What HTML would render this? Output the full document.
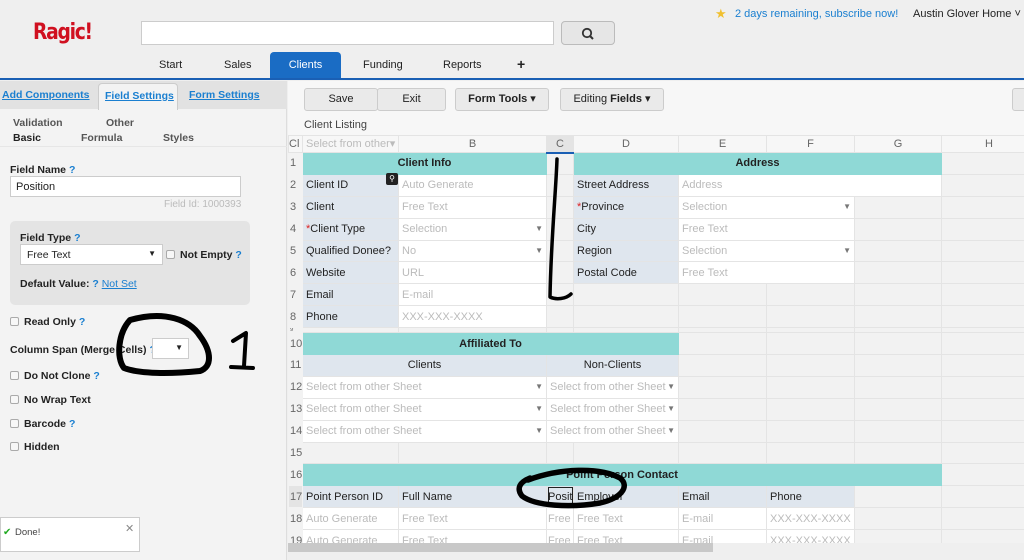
<!DOCTYPE html>
<html><head><meta charset="utf-8"><style>
*{margin:0;padding:0;box-sizing:border-box}
html,body{width:1024px;height:560px;overflow:hidden}
body{background:#efefef;font-family:"Liberation Sans","DejaVu Sans",sans-serif;font-size:11px;color:#222;position:relative}
.a{position:absolute}
.b{font-weight:bold}
.q{color:#1a7fd0;font-weight:bold}
.btn{position:absolute;top:88px;height:23px;border:1px solid #ccc;border-radius:3px;background:#eaeaea;text-align:center;line-height:21px;font-size:11px}
table{position:absolute;left:288px;top:135px;border-collapse:collapse;table-layout:fixed;width:748px}
td{border:1px solid #e4e4e4;height:21.9px;padding:0 3px;white-space:nowrap;overflow:hidden;font-size:11px;line-height:14px;background:#f2f2f2}
td.rn{color:#666;padding:0 1px;background:#f2f2f2;border-color:#f2f2f2}
td.h{background:#8fd9d6;font-weight:bold;text-align:center;border-color:#8fd9d6}
td.l{background:#dfe6ee;color:#222}
td.w{background:#fff;color:#bbb}
tr.r9 td{height:5px;line-height:4px;font-size:6px}
.ar{float:right;font-size:8px;color:#777}
tr.hd td{height:17px;text-align:center;color:#666;background:#f7f7f7}
.cb{display:inline-block;width:9px;height:9px;border:1px solid #aaa;border-radius:2px;background:#f7f7f7;margin-right:5px;vertical-align:-1px}
.lt{position:absolute;left:10px;font-weight:bold;font-size:10.5px}
</style></head><body>
<div class="a" style="left:33px;top:20px;font-size:22px;font-weight:900;color:#d01020;font-family:'DejaVu Sans',sans-serif;letter-spacing:-1.5px;transform:scaleX(0.85);transform-origin:left">Ragic!</div>
<div class="a" style="left:141px;top:21px;width:413px;height:24px;background:#fff;border:1px solid #ccc"></div>
<div class="a" style="left:561px;top:21px;width:54px;height:24px;background:#e6e6e6;border:1px solid #bbb;border-radius:4px"><svg width="54" height="24"><circle cx="25" cy="11" r="4.2" fill="none" stroke="#333" stroke-width="1.8"/><line x1="28" y1="14" x2="31" y2="17" stroke="#333" stroke-width="2"/></svg></div>
<div class="a" style="left:715px;top:6px;color:#f0c030;font-size:13px">★</div>
<div class="a" style="left:735px;top:8px;color:#1a7fd0;font-size:11px">2 days remaining, subscribe now!</div>
<div class="a" style="left:913px;top:8px;font-size:11px">Austin Glover Home ˅</div>
<div class="a" style="left:159px;top:59px;font-size:11px">Start</div>
<div class="a" style="left:224px;top:59px;font-size:11px">Sales</div>
<div class="a" style="left:270px;top:52px;width:71px;height:27px;background:#1a6cc4;border-radius:4px 4px 0 0;color:#fff;text-align:center;line-height:27px;font-size:11px">Clients</div>
<div class="a" style="left:363px;top:59px;font-size:11px">Funding</div>
<div class="a" style="left:443px;top:59px;font-size:11px">Reports</div>
<div class="a b" style="left:517px;top:56px;font-size:14px">+</div>
<div class="a" style="left:0;top:78px;width:1024px;height:2px;background:#1a5fb4"></div>
<div class="a" style="left:0;top:81px;width:287px;height:479px;background:#f3f3f3;border-right:1px solid #ddd"></div>
<div class="a" style="left:0;top:81px;width:287px;height:28px;background:#e2e2e2"></div>
<div class="a" style="left:2px;top:89px;color:#1a7fd0;font-weight:bold;text-decoration:underline;font-size:10.5px">Add Components</div>
<div class="a" style="left:98px;top:83px;width:80px;height:27px;background:#f3f3f3;border:1px solid #ccc;border-bottom:none;border-radius:4px 4px 0 0"></div>
<div class="a" style="left:105px;top:90px;color:#1a7fd0;font-weight:bold;text-decoration:underline;font-size:10.5px">Field Settings</div>
<div class="a" style="left:189px;top:89px;color:#1a7fd0;font-weight:bold;text-decoration:underline;font-size:10.5px">Form Settings</div>
<div class="a b" style="left:13px;top:117px;color:#555;font-size:10.5px">Validation</div>
<div class="a b" style="left:106px;top:117px;color:#555;font-size:10.5px">Other</div>
<div class="a b" style="left:13px;top:132px;font-size:10.5px">Basic</div>
<div class="a b" style="left:81px;top:132px;color:#555;font-size:10.5px">Formula</div>
<div class="a b" style="left:163px;top:132px;color:#555;font-size:10.5px">Styles</div>
<div class="a" style="left:0;top:146px;width:287px;height:1px;background:#e6e6e6"></div>
<div class="lt" style="top:164px">Field Name <span class="q">?</span></div>
<div class="a" style="left:10px;top:176px;width:231px;height:21px;background:#fff;border:1px solid #ccc;padding:4px 5px;font-size:11px">Position</div>
<div class="a" style="left:164px;top:199px;color:#bbb;font-size:10px">Field Id: 1000393</div>
<div class="a" style="left:10px;top:221px;width:240px;height:84px;background:#e4e4e4;border-radius:5px"></div>
<div class="lt" style="left:20px;top:232px">Field Type <span class="q">?</span></div>
<div class="a" style="left:20px;top:244px;width:143px;height:21px;background:#fff;border:1px solid #ccc;padding:4px 6px;font-size:10.5px">Free Text<span style="float:right;font-size:8px">▼</span></div>
<div class="a b" style="left:166px;top:249px;font-size:10.5px"><span class="cb"></span>Not Empty <span class="q">?</span></div>
<div class="lt" style="left:20px;top:278px">Default Value: <span class="q">?</span> <span style="color:#1a7fd0;font-weight:normal;text-decoration:underline">Not Set</span></div>
<div class="lt" style="top:316px"><span class="cb"></span>Read Only <span class="q">?</span></div>
<div class="lt" style="top:344px">Column Span (Merge Cells) <span class="q">?</span></div>
<div class="a" style="left:152px;top:338px;width:37px;height:21px;background:#fff;border:1px solid #ccc;font-size:8px;text-align:right;padding:4px 5px">▼</div>
<div class="lt" style="top:370px"><span class="cb"></span>Do Not Clone <span class="q">?</span></div>
<div class="lt" style="top:394px"><span class="cb"></span>No Wrap Text</div>
<div class="lt" style="top:418px"><span class="cb"></span>Barcode <span class="q">?</span></div>
<div class="lt" style="top:441px"><span class="cb"></span>Hidden</div>
<div class="a" style="left:0;top:517px;width:140px;height:35px;background:#fff;border:1px solid #ccc"></div>
<div class="a" style="left:3px;top:527px;color:#2a2;font-size:10px">✔</div>
<div class="a" style="left:15px;top:527px;color:#444;font-size:9.5px">Done!</div>
<div class="a" style="left:125px;top:522px;color:#888;font-size:11px">✕</div>
<div class="a" style="left:288px;top:81px;width:736px;height:54px;background:#f7f7f7"></div>
<div class="btn" style="left:304px;width:74px">Save</div>
<div class="btn" style="left:377px;width:69px">Exit</div>
<div class="btn b" style="left:455px;width:94px">Form Tools ▾</div>
<div class="btn" style="left:560px;width:104px">Editing <b>Fields</b> ▾</div>
<div class="btn" style="left:1012px;width:20px"></div>
<div class="a" style="left:304px;top:119px;font-size:11px;color:#444">Client Listing</div>
<table>
<colgroup><col style="width:14px"><col style="width:96px"><col style="width:148px"><col style="width:27px"><col style="width:105px"><col style="width:88px"><col style="width:88px"><col style="width:87px"><col style="width:95px"></colgroup>
<tr class="hd"><td style="padding:0;text-align:left">Cl</td><td style="color:#bbb;text-align:left">Select from other▾</td><td>B</td><td style="background:#e4e4e4;border-bottom:2px solid #1a5fb4">C</td><td>D</td><td>E</td><td>F</td><td>G</td><td>H</td></tr>
<tr><td class="rn">1</td><td class="h" colspan="2">Client Info</td><td></td><td class="h" colspan="4">Address</td><td></td></tr>
<tr><td class="rn">2</td><td class="l">Client ID</td><td class="w">Auto Generate</td><td></td><td class="l">Street Address</td><td class="w" colspan="3">Address</td><td></td></tr>
<tr><td class="rn">3</td><td class="l">Client</td><td class="w">Free Text</td><td></td><td class="l"><span style="color:#d22">*</span>Province</td><td class="w" colspan="2">Selection<span class="ar">▼</span></td><td></td><td></td></tr>
<tr><td class="rn">4</td><td class="l"><span style="color:#d22">*</span>Client Type</td><td class="w">Selection<span class="ar">▼</span></td><td></td><td class="l">City</td><td class="w" colspan="2">Free Text</td><td></td><td></td></tr>
<tr><td class="rn">5</td><td class="l">Qualified Donee?</td><td class="w">No<span class="ar">▼</span></td><td></td><td class="l">Region</td><td class="w" colspan="2">Selection<span class="ar">▼</span></td><td></td><td></td></tr>
<tr><td class="rn">6</td><td class="l">Website</td><td class="w">URL</td><td></td><td class="l">Postal Code</td><td class="w" colspan="2">Free Text</td><td></td><td></td></tr>
<tr><td class="rn">7</td><td class="l">Email</td><td class="w">E-mail</td><td></td><td></td><td></td><td></td><td></td><td></td></tr>
<tr><td class="rn">8</td><td class="l">Phone</td><td class="w">XXX-XXX-XXXX</td><td></td><td></td><td></td><td></td><td></td><td></td></tr>
<tr class="r9"><td class="rn">9</td><td></td><td></td><td></td><td></td><td></td><td></td><td></td><td></td></tr>
<tr><td class="rn">10</td><td class="h" colspan="4">Affiliated To</td><td></td><td></td><td></td><td></td></tr>
<tr><td class="rn">11</td><td class="l" colspan="2" style="text-align:center">Clients</td><td class="l" colspan="2" style="text-align:center">Non-Clients</td><td></td><td></td><td></td><td></td></tr>
<tr><td class="rn">12</td><td class="w" colspan="2">Select from other Sheet<span class="ar">▼</span></td><td class="w" colspan="2">Select from other Sheet<span class="ar">▼</span></td><td></td><td></td><td></td><td></td></tr>
<tr><td class="rn">13</td><td class="w" colspan="2">Select from other Sheet<span class="ar">▼</span></td><td class="w" colspan="2">Select from other Sheet<span class="ar">▼</span></td><td></td><td></td><td></td><td></td></tr>
<tr><td class="rn">14</td><td class="w" colspan="2">Select from other Sheet<span class="ar">▼</span></td><td class="w" colspan="2">Select from other Sheet<span class="ar">▼</span></td><td></td><td></td><td></td><td></td></tr>
<tr><td class="rn">15</td><td></td><td></td><td></td><td></td><td></td><td></td><td></td><td></td></tr>
<tr><td class="rn">16</td><td class="h" colspan="7">Point Person Contact</td><td></td></tr>
<tr><td class="rn" style="background:#e4e4e4">17</td><td class="l">Point Person ID</td><td class="l">Full Name</td><td class="l" style="padding:0 1px;outline:1.5px solid #222;outline-offset:-2px">Posit</td><td class="l">Employer</td><td class="l">Email</td><td class="l">Phone</td><td></td><td></td></tr>
<tr><td class="rn">18</td><td class="w">Auto Generate</td><td class="w">Free Text</td><td class="w" style="padding:0 1px">Free</td><td class="w">Free Text</td><td class="w">E-mail</td><td class="w">XXX-XXX-XXXX</td><td></td><td></td></tr>
<tr><td class="rn">19</td><td class="w">Auto Generate</td><td class="w">Free Text</td><td class="w" style="padding:0 1px">Free</td><td class="w">Free Text</td><td class="w">E-mail</td><td class="w">XXX-XXX-XXXX</td><td></td><td></td></tr>
</table>
<div class="a" style="left:386px;top:173px;width:12px;height:12px;background:#222;border-radius:2px;color:#fff;font-size:8px;text-align:center;line-height:12px">⚲</div>
<div class="a" style="left:288px;top:543px;width:736px;height:17px;background:#efefef"></div>
<div class="a" style="left:288px;top:543px;width:425px;height:9px;background:#c8c8c8"></div>
<svg class="a" style="left:0;top:0" width="1024" height="560">
<g fill="none" stroke="#000" stroke-linecap="round" stroke-linejoin="round">
<path d="M557 159 C556 190 551 240 550 297 C556 300 566 299 571 294" stroke-width="3.5"/>
<path d="M130 320 C165 310 190 320 200 336 C212 352 212 367 200 371 C170 374 140 374 124 368 C116 358 118 333 130 320 Z" stroke-width="6"/>
<path d="M233 341 L246 333 L244 366 M231 367 L253 368" stroke-width="4"/>
<path d="M528 480 C560 468 600 467 620 478 C630 486 622 498 600 503 C570 508 535 506 522 496 C516 488 520 482 530 478" stroke-width="5.5"/>
</g></svg>
</body></html>
